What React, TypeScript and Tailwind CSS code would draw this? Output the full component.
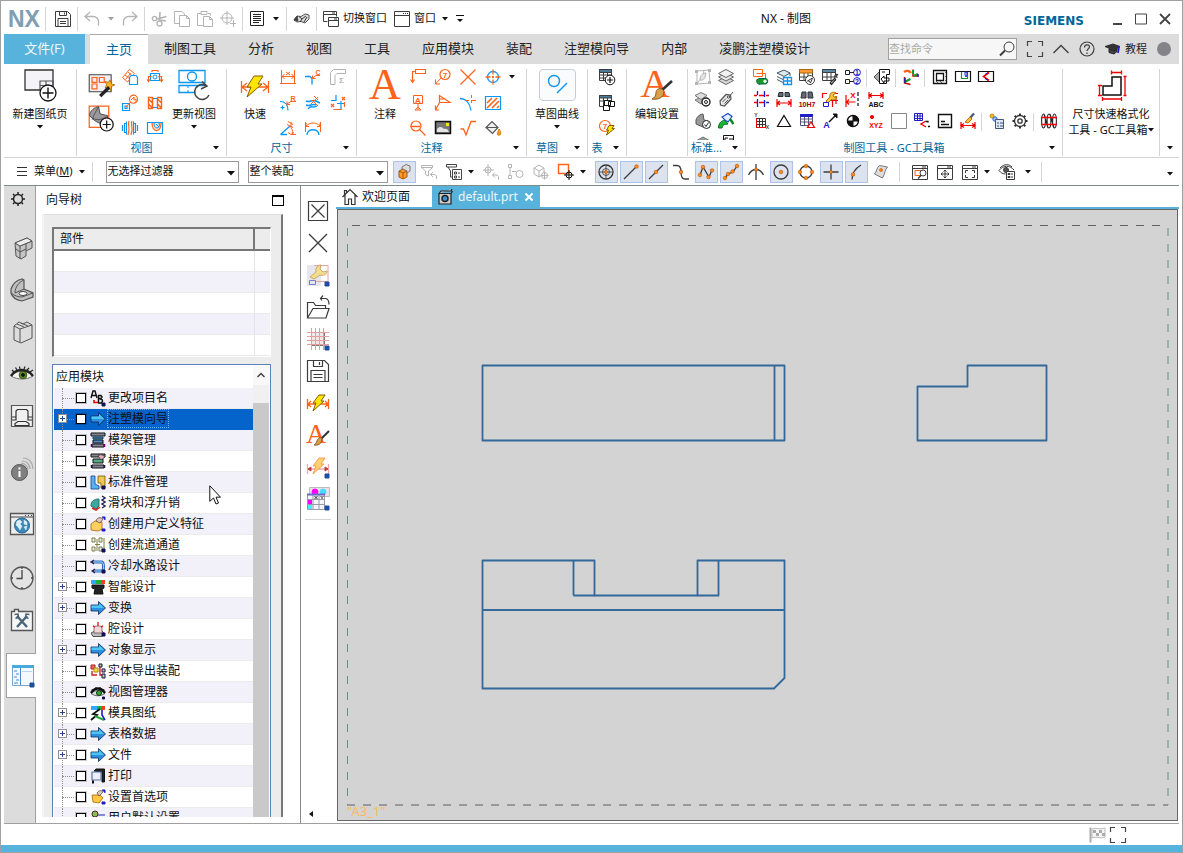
import type { ReactNode } from "react";
import clsx from "clsx";

const ORANGE = "#ff6319";
const BLUE = "#0a96f5";
const DARK = "#3c3c3c";
const RED = "#f00000";
const NAVY = "#1c1cc8";
const MUTED = "#b4b4b4";

type Paint = { c?: string; f?: string; w?: number };

const P = ({ d, c = DARK, f = "none", w = 1 }: Paint & { d: string }) => (
  <path d={d} stroke={c} fill={f} strokeWidth={w} />
);
const C = ({ x, y, r, c = DARK, f = "none", w = 1 }: Paint & { x: number; y: number; r: number }) => (
  <circle cx={x} cy={y} r={r} stroke={c} fill={f} strokeWidth={w} />
);
const T = ({ x, y, s = 8, c = DARK, children }: { x: number; y: number; s?: number; c?: string; children: string }) => (
  <text x={x} y={y} fontSize={s} fill={c} stroke="none" textAnchor="middle" fontWeight="bold" fontFamily="Liberation Sans, sans-serif">
    {children}
  </text>
);
const Dots = ({ at, r = 1.8 }: { at: number[][]; r?: number }) => (
  <>
    {at.map(([x, y]) => (
      <C key={`${x}-${y}`} x={x} y={y} r={r} c="#b85000" f="#ff8c1e" w={0.6} />
    ))}
  </>
);
const Badge = () => <P d="M19 19h4v4h-4z" c="#1d4fa0" f="#1d4fa0" />;

const glyphs: Record<string, ReactNode> = {
  // quick access bar
  save: <P d="M.5.5h12l3 3v12H.5zM4.500.5v4h7v-4M9.500 1.500v2M3 15.500v-8h10v8M5 10.500h6M5 12.500h6" />,
  undo: <P d="M6 1 1 5.500 6 10M1 5.500h8.500a5 5 0 0 1 5 5v4" c={MUTED} w={1.3} />,
  redo: <P d="M10 1l5 4.500-5 4.500M15 5.500H6.500a5 5 0 0 0-5 5v4" c={MUTED} w={1.3} />,
  cut: (
    <>
      <C x={3.5} y={7.5} r={2.2} c={MUTED} w={1.3} />
      <C x={8.5} y={12.5} r={2.5} c={MUTED} w={1.3} />
      <P d="M8.500 10 9 1M6 8l9.500-2.500M9 9l6 1" c={MUTED} w={1.6} />
    </>
  ),
  copy: <P d="M10.500 4.500V3l-2.500-2.500H.5v12h5M5.500 4.500h7l3 3v8h-10zM12.500 4.500v3h3" c={MUTED} />,
  paste: <P d="M6 14.500H.5v-12H4M11 2.500h2.500v2M4 .5h6v3H4zM6.500 5.500h6l3 3v7h-9zM12.500 5.500v3h3" c={MUTED} />,
  pan: (
    <>
      <C x={7} y={7} r={5} c={MUTED} />
      <P d="M7 0v14M0 7h14M13.500 9v7M10 12.500h6" c={MUTED} />
    </>
  ),
  lines: <P d="M1.500.5h13v14h-13zM4 3.500h8M4 5.500h8M4 7.500h8M4 9.500h8M4 11.500h6" c="#222" />,
  hand: (
    <>
      <P d="M0 9 3 5l4 .5L11 3l4 1v4l-4 4-4-1.500-4 .5z" c="#555" f="#ddd" />
      <P d="M5 5.500 8 8l4-3M8 8l-2 3M10 11l3-5" c="#333" />
      <P d="M0 9 3 5l1 5z" c="#444" f="#444" />
    </>
  ),
  switchWin: <P d="M4.500 10.500h-4v-10h13v5M.5 3.500h13M9 2h3M5.500 6.500h10v9h-10zM5.500 9.500h10M11 8h3" />,
  window: <P d="M.5.5h15v15H.5zM.5 4.500h15M9 2.500h1M11 2.500h1M13 2.500h1" />,
  more: (
    <>
      <P d="M4 4.500h8" c="#111" />
      <P d="M5 8h6l-3 3z" c="none" f="#111" />
    </>
  ),
  search: (
    <>
      <C x={10} y={6} r={5} />
      <P d="M6 9.500 1 14.500" w={2} />
    </>
  ),
  corners: <P d="M5 .5H.5V5M11 .5h4.500V5M5 15.500H.5V11M11 15.500h4.500V11" c="#444" w={1.2} />,
  up: <P d="M.5 12 8 4.500l7.500 7.500" w={1.3} />,
  help: (
    <>
      <C x={8} y={8} r={7} w={1.2} />
      <P d="M5.500 6.500c0-3.500 5-3.500 5-.5 0 1.500-2.500 2-2.500 4M8 11.500v1.500" w={1.2} />
    </>
  ),
  cap: (
    <>
      <P d="M0 5.500 8 3l7 2.500-6 4z" c="#333" f="#333" />
      <P d="M4 8v3.500l5 1.500 3-2.500V8L9 10z" c="#222" f="#444" />
      <P d="M14 5.500 13 12" c={NAVY} w={1.8} />
    </>
  ),

  // view group
  viewProjected: (
    <>
      <P d="M.5 8.500 7.500.5l5 4-7 8.500zM3 6l5 4M6 3l4.500 4M3.500 10.500 9 4" c={ORANGE} />
      <P d="M7.500 8.500 9 6.500h5l1.500 2v7h-8z" c={BLUE} f="#fff" w={1.2} />
    </>
  ),
  viewDetail: (
    <>
      <P d="M.5 8.500h7v7h-7zM3 11h2v2.500H3z" c={BLUE} w={1.2} />
      <C x={11.5} y={4.2} r={4} c={ORANGE} w={1.2} />
      <P d="M4 12 8.500 7M9 5l3-3v3l2-1v3" c={ORANGE} />
    </>
  ),
  viewBreak: (
    <>
      <P d="M4 3.500H2.500v9H4M.5 5v6M12 3.500h1.500v9H12M15.500 5v6M4.500 1.500v13M11.500 1.500v13" c={BLUE} w={1.2} />
      <P d="M7 1c-2 4 2 5-1 14M10 1c-2 4 2 5-1 14" c={ORANGE} w={1.2} />
    </>
  ),
  viewSection: (
    <>
      <P d="M3.500 4.500h9v7h-9z" c={BLUE} w={1.2} />
      <C x={8} y={8} r={2} c={BLUE} />
      <P d="M1.500 12V7.500h3M14.500 12V7.500h-3M0 10.500l1.500 2 1.500-2M13 10.500l1.500 2 1.500-2M5 3V1.500h6V3" c={ORANGE} w={1.2} />
    </>
  ),
  viewHalf: (
    <>
      <P d="M5.500 3.500h5v9h-5z" c={BLUE} w={1.2} />
      <P d="M1.500 2.500h4v11h-4zM10.500 2.500h4v11h-4zM1.500 4l4 4M1.500 9l4 4M10.500 4l4 4M10.500 9l4 4" c={ORANGE} w={1.4} />
    </>
  ),
  viewBreakout: (
    <>
      <P d="M.5 2.500h15v11H.5z" c={BLUE} w={1.2} />
      <P d="M5 3c0 4 2 8 5 7.500S14 6 14 3" c={ORANGE} f="#ffe4d4" w={1.2} />
      <P d="M7 3c0 3 1 5 3 5s3-2 2-5M9 4l3 3" c={BLUE} />
    </>
  ),

  // dimension group
  dimLinear: <P d="M1.500 1v13M14.500 1v13M2 7.500h12M4.500 5 2 7.500 4.500 10M11.500 5 14 7.500 11.500 10M0 14.500h16M6 3l4 3M10 3 6 6" c={ORANGE} />,
  dimChamfer: (
    <>
      <P d="M0 7.500h5l2 2v6" c={BLUE} w={1.3} />
      <P d="M15 6.500H11L7 9.500M7.500 6.500v3h3" c={ORANGE} />
      <T x={13} y={5.5} s={7} c={ORANGE}>C</T>
    </>
  ),
  dimOrdinate: (
    <>
      <P d="M.5 15.500v-12l3-3h12v4H7l-2 2v9z" c={MUTED} />
      <T x={11.5} y={14} s={8} c={MUTED}>Σ</T>
    </>
  ),
  dimRadial: (
    <>
      <P d="M0 6.500c5 0 8 3 8 9M.5 12.500h4M2.500 10.500v4" c={BLUE} w={1.2} />
      <P d="M16 6.500h-5L6 9.500M7 6.500v3h3" c={ORANGE} />
      <T x={13} y={5.5} s={7} c={ORANGE}>R</T>
    </>
  ),
  dimThick: (
    <>
      <P d="M1 6c4 2 6-2 10 0s4 2 4 2M1 10c4 2 6-2 10 0M3 14C6 9 8 14 12 11" c={BLUE} w={1.4} />
      <P d="M6 9 13 2M7 5l6 6M9 1l4 4" c={ORANGE} />
    </>
  ),
  dimArc: (
    <>
      <P d="M1 5.500h5M6 3v3M7 8.500h7M11 6v9M6 0v4" c={BLUE} w={1.2} />
      <P d="M1 9l3 3M4 9l-3 3M12 2l3 3M15 2l-3 3M3.500 14.500h8M14.500 7v5" c={ORANGE} w={1.2} />
    </>
  ),
  dimAngle: (
    <>
      <P d="M.5 14.500 10 6M.5 14.500H7" c={BLUE} w={1.3} />
      <P d="M8 1.500l5 3M7 4.500l6 3M11 2v6c2 2 2 5 1 7M8 12.500l3 2 3-2M11 14.500h5" c={ORANGE} />
    </>
  ),
  dimCurve: (
    <>
      <P d="M2 15c0-7 12-7 12 0" c={BLUE} w={1.4} />
      <P d="M.5 2v10M15.500 2v10M1 6c4-4 10-4 14 0M1 3v3.500h3M15 3v3.500h-3" c={ORANGE} />
    </>
  ),

  // annotation group
  leader: <P d="M5.500 4.500h10v-4h-10zM5.500 2.500H2.500v11M.5 10.500l2 3 2-3" c={ORANGE} w={1.2} />,
  datum: (
    <>
      <P d="M3.500.5h9v8h-9zM8 8.500v6M5 15l3-3 3 3z" c={ORANGE} />
      <T x={8} y={7.5} s={8} c={ORANGE}>A</T>
    </>
  ),
  magnify: (
    <>
      <C x={6} y={6} r={5} c={ORANGE} w={1.2} />
      <P d="M.5 6.500h10M9.500 9.500l6 6" c={ORANGE} w={1.3} />
    </>
  ),
  balloon: (
    <>
      <C x={10} y={5.5} r={5} c={ORANGE} w={1.2} />
      <P d="M6 9 .5 15M.5 10.500V15h4.500" c={ORANGE} />
      <T x={10} y={8.5} s={8} c={ORANGE}>7</T>
    </>
  ),
  flag: <P d="M4.500 7V.5L15 7.500H4.500L.5 15M.5 10.500V15h3.500M4.500 4h5" c={ORANGE} w={1.2} />,
  picture: (
    <>
      <P d="M.5 1.500h15v12H.5z" c="#111" f="#777" w={1.5} />
      <P d="M2 12V9c3-3 5-2 7 0 2-1 4 0 5 3z" c="none" f="#e4e4e4" />
      <P d="M11 3h3v3h-3z" c="none" f="#ffe600" />
    </>
  ),
  cross: <P d="M.5.5l15 15M15.500.5l-15 15" c={ORANGE} w={1.2} />,
  intersection: (
    <>
      <P d="M0 3.500c6 0 10 5 11 12" c={BLUE} w={1.3} />
      <P d="M6 5.500h3M11 5.500h5M11.500 0v3M11.500 5v3" c={ORANGE} />
    </>
  ),
  surface: <P d="M.5 9h3l2.500 6L11 1.500h5" c={ORANGE} w={1.3} />,
  target: (
    <>
      <C x={8} y={8} r={5.5} c={BLUE} w={1.3} />
      <P d="M8 .5v5M8 10.500v5M.5 8h5M10.500 8h5M7 8h2M8 7v2" c={ORANGE} w={1.3} />
    </>
  ),
  hatch: (
    <>
      <P d="M.5 1.500h15v13H.5z" c={BLUE} w={1.2} />
      <P d="M2 8l5-5M2 13 12 3M7 13l7-7M12 13l2-2" c={ORANGE} w={1.6} />
    </>
  ),
  fill: (
    <>
      <P d="M1 7.500 7 1.500l6 6-5.500 6zM1 7.500h11" c="#555" f="#f0f0f0" w={1.2} />
      <P d="M14 9c1.500 2.500 2 3 1.500 5s-3 1.500-3 0 1-3.500 1.500-5z" c="#d77a00" f="#ff9a1e" />
    </>
  ),

  // table group
  tableAdd: (
    <>
      <P d="M.5.5h12v11H.5zM.5 6h12M4.500 3v9M8.500 3v9M.5 9h12" />
      <P d="M.5.5h12v3H.5z" f="#4a7a9a" />
      <C x={11} y={11} r={4.8} c="#111" f="#fff" />
      <P d="M8 11h6M11 8v6" c="#111" w={1.2} />
    </>
  ),
  tableParts: (
    <>
      <P d="M.5.5h12v11H.5zM.5 6h12M4.500 3v9M8.500 3v9" />
      <P d="M.5.5h12v2.500H.5z" f="#4a7a9a" />
      <P d="M5.500 5.500h6v5h-6zM9.500 6.500h6v5h-6zM4.500 10.500h6v5h-6z" c="#111" f="#fff" />
    </>
  ),
  balloonAuto: (
    <>
      <C x={6} y={6} r={5.5} c={ORANGE} w={1.2} />
      <T x={6} y={9} s={8} c={ORANGE}>7</T>
      <P d="M10 5.500h5l-2 3h2.500L7.500 15l2-5H7.500z" c="#8a5a00" f="#ffe600" />
    </>
  ),

  // standard tools
  plane: (
    <>
      <P d="M2 2l12-1 1 13-13 1zM2 15c3-6 6-5 7-14" c={MUTED} />
      <P d="M0 1h3v3H0zM13 0h3v3h-3zM0 13h3v3H0zM13 12h3v3h-3z" c="none" f={MUTED} />
      <P d="M5 11c0-5 3-7 6-7-1 5-2 8-6 7z" c={MUTED} f="#e4e4e4" />
    </>
  ),
  layers: (
    <>
      <P d="M.5 11.500l7.500-4 7.500 4-7.500 4z" c="#666" f="#d8d8d8" />
      <P d="M.5 8l7.500-4 7.500 4-7.500 4z" c="#666" f="#e4e4e4" />
      <P d="M.5 4.500l7.500-4 7.500 4-7.500 4z" c="#666" f="#f0f0f0" />
    </>
  ),
  layerGear: (
    <>
      <P d="M0 9l6-3 6 3-6 4z" c="#777" f="#bbb" />
      <P d="M0 4.500l6-3 6 3-6 4z" c="#777" f="#ddd" />
      <C x={11} y={11} r={4} c="#222" f="#fff" w={1.4} />
      <C x={11} y={11} r={1.5} c="#222" />
    </>
  ),
  tag: (
    <>
      <P d="M2 10 8 3.500l4.500.5.500 4-6.500 7-4-1z" c="#555" f="#e8e8e8" w={1.2} />
      <C x={10.5} y={6} r={1.2} c="#555" />
      <P d="M4.500 11l3.500-3.500M6.500 12.500 10 9M11 6l4-5" c="#555" />
    </>
  ),
  partCheck: (
    <>
      <P d="M1 7C2 3 6 1 8 1l1 6 4 1-5 6-7-3z" c="#555" f="#999" />
      <C x={11.5} y={11.5} r={4} c="#222" f="#fff" />
      <P d="M9.500 11.500l1.500 2 2.500-4" c="#222" />
    </>
  ),
  paint: (
    <>
      <P d="M.5 15c0-6 4-7 6-8l3.500 4c-2 1-5-1-6 4z" c="#0a6a1a" f="#17b83a" />
      <P d="M4 4l6-3.500 4 3L10 9 7 7z" c="#1c4fc8" f="#e8f0ff" w={1.2} />
      <P d="M12 6l3.500 5" c="#0a8a1a" w={2.4} />
    </>
  ),
  chip: <P d="M0 6.500 8 2l8 4.500v9L8 12z" c="#777" f="#999" />,
  chipEn: (
    <>
      <P d="M0 9l6-5v5z" c="#777" f="#999" />
      <P d="M5.500.5h10v9h-10zM7 3h3M7 3v5M12 3v5M14 3v5" c="#111" />
    </>
  ),

  // GC toolbox
  gcExport: (
    <>
      <P d="M.5.5h9v7h-9zM3.500 4.500h9v6h-9" c={ORANGE} />
      <P d="M5.500 9.500H13a3 3 0 0 1 0 5.500H8a3 3 0 0 1-2.500-5.500z" c="#064" f="#1a9a28" />
      <C x={12} y={12.3} r={1.2} c="#fff" f="#fff" />
    </>
  ),
  gcLayers: (
    <>
      <P d="M1 4l7-3 6 3-6 3.500zM1 7.500l6 3M1 10.500l6 3M14 4v3" c="#456" f="#dde8ec" />
      <P d="M7.500 8.500h8v7h-8zM7.500 12h8M11.500 8.500v7" c={BLUE} f="#fff" w={1.3} />
    </>
  ),
  gcTableSend: (
    <>
      <P d="M.5.5h13v11H.5zM.5 8h13M5 4v8M9 4v8" />
      <P d="M.5.5h13V4H.5z" c="#a60" f="#ff9a3c" />
      <C x={11} y={11} r={4.5} f="#fff" />
      <P d="M8.500 12l5-3-2 5-1-2z" />
    </>
  ),
  gcTableTool: (
    <>
      <P d="M.5.5h13v11H.5zM.5 8h13M5 4v8M9 4v8" />
      <P d="M.5.5h13v3H.5z" f="#5a8aa8" />
      <P d="M8 14l5-5c-1-3 1-4 2.500-3.500L14 7.500l1.500 1M8 14l1.500 1.500L14 10" c="#333" f="#fff" w={1.2} />
    </>
  ),
  gcBalloons: (
    <>
      <P d="M.5 1.500h4v4h-4zM.5 10.500h4v4h-4zM5 3.500h4M5 12.500h4" c="#222" />
      <C x={12} y={3.5} r={3.4} c={NAVY} />
      <C x={12} y={12} r={3.4} c={NAVY} />
      <T x={12} y={6} s={7} c={NAVY}>1</T>
      <T x={12} y={14.5} s={7} c={NAVY}>2</T>
    </>
  ),
  gcConvert: (
    <>
      <P d="M0 8l5-5h5v10H5z" c="#555" f="#aaa" />
      <P d="M5.500.5h10v5h-3v9h-7zM8 3h3M7 10l3-3v2h5v3h-5v2z" c="#111" f="#fff" />
    </>
  ),
  gcCsys: (
    <>
      <P d="M1 3c3-2 6-1 7 1" c={ORANGE} w={2.4} />
      <P d="M10 .5V7h5.500M1.500 8v6l6 1.500" c="#c00" w={1.5} />
      <P d="M10 1v4M1.500 13l6-3M10 7l5-2" c="#139a2a" w={2} />
      <P d="M2 9v5M15 5v3" c={NAVY} w={1.5} />
    </>
  ),
  gcHole: (
    <>
      <P d="M3 15 1 13M7 15l-3-3M11 15l-3-3M15 13l-2-2M15 9l-2-2M15 5l-2-2" c="#777" />
      <P d="M1.500 1.500h13v13h-13zM4.500 4.500h7v7h-7z" c="#111" w={1.3} />
    </>
  ),
  gcPocket: (
    <>
      <P d="M.5 2.500h15v10H.5z" c="#111" w={1.2} />
      <P d="M6.500 3v6.500h6V3" c="#139a2a" w={1.2} />
      <P d="M10 3v3l1 2 1-2V3z" c={NAVY} />
    </>
  ),
  gcNotch: (
    <>
      <P d="M.5 2.500h15v10H.5z" c="#111" w={1.2} />
      <P d="M11 3.500 5.500 7.500l5.500 4" c={RED} w={1.6} />
      <P d="M10 3.500 7 5.500M10 11.500 7 9.500" c={NAVY} />
    </>
  ),
  gcCross: (
    <>
      <P d="M1 4.500h3M6 4.500h5M13 4.500h3M1 11.500h3M6 11.500h5" c={RED} w={1.3} />
      <P d="M4.500 0v4M4.500 8v8M11.500 0v6M11.500 9v7M13 11.500h3" c={NAVY} w={1.3} />
    </>
  ),
  gcFind: (
    <>
      <P d="M3 1.500h4v4H2zM9 1.500h4l1 4H9z" c="#233" f="#667" />
      <P d="M1 8v8M15 8v8M1 12h14M4 10l-3 2 3 2M12 10l3 2-3 2" c={RED} w={1.2} />
    </>
  ),
  gcTol: (
    <>
      <P d="M3 1h4v6H2zM9 1h4l1 6H9z" c="#233" f="#667" />
      <T x={8} y={16} s={7} c="#a00000">10H7</T>
    </>
  ),
  gcWrench: (
    <>
      <P d="M.5 7V2.500H5M10 2.500h6M10.500 9v7M5 9.500h11M14 5v8" c={RED} w={1.2} />
      <P d="M4 10l4-4c-1-4 3-6 6-4l-3 2 1 2 3 0c-1 3-4 3-5 2l-4 4z" c="#a60" f="#ffc838" />
      <P d="M1.500 11.500h5v4h-5z" c={NAVY} />
    </>
  ),
  gcDimX: (
    <>
      <P d="M1 4v12M1.500 11h9M4 8.500 1.500 11 4 13.500" c={RED} w={1.2} />
      <P d="M13 1v4M13 7v3M13 12v3" c="#111" w={1.2} />
      <T x={8} y={7} s={8} c={RED}>X</T>
    </>
  ),
  gcAbc: (
    <>
      <P d="M1 1v7M15 1v7M1 4.500h14M4 2.500l-3 2 3 2M12 2.500l3 2-3 2" c={RED} w={1.2} />
      <T x={8} y={15.5} s={7} c="#111">ABC</T>
    </>
  ),
  gcGrid: (
    <>
      <P d="M3.500 5.500h9v9h-9zM6.500 5.500v9M9.500 5.500v9M3.500 8.500h9M3.500 11.500h9" c="#333" />
      <P d="M3.500 5v9.500H13" c={RED} />
      <T x={3} y={4} s={5}>Y</T>
      <T x={14.5} y={15.5} s={5}>X</T>
    </>
  ),
  gcTriangle: <P d="M8 2.500 14.500 13.500h-13z" c="#111" w={1.2} />,
  gcSheet: (
    <>
      <P d="M1.500 1.500h12v11h-12zM1.500 6h12M1.500 9h12M5.500 3v9M9.500 3v9" c="#557" />
      <P d="M1.500 1.500h12v2h-12z" c={NAVY} f={NAVY} />
      <P d="M12 9l3.500 5.500H8.500z" c={RED} f="#fff" w={1.2} />
    </>
  ),
  gcArrowA: (
    <>
      <P d="M7 9l6-6" c="#111" w={1.5} />
      <P d="M11 1h4v4z" c="#111" f="#111" />
      <T x={4.5} y={15} s={9} c={NAVY}>A</T>
    </>
  ),
  gcCog: (
    <>
      <C x={8} y={8} r={5.5} c="#111" f="#fff" w={1.4} />
      <P d="M8 8V2.500A5.500 5.500 0 0 1 13.500 8zM8 8v5.500A5.500 5.500 0 0 1 2.500 8z" c="#111" f="#111" />
    </>
  ),
  gcXyz: (
    <>
      <C x={4} y={4} r={1.6} c={RED} f={RED} />
      <T x={8} y={15} s={7} c={RED}>XYZ</T>
    </>
  ),
  gcBlank: <P d="M.5.5h15v15H.5z" c="#888" />,
  gcGridSnap: (
    <>
      <P d="M.5.5h8v7h-8zM.5 3h8M.5 5.500h8M3.500.5v7M6 .5v7" c={NAVY} />
      <P d="M12 8 7 11l5 3" c={RED} w={1.4} />
      <P d="M12 8.500h2v1M14 13.500h2" c="#111" w={1.4} />
    </>
  ),
  gcNote: <P d="M1.500 1.500h13v13h-13zM4 8.500h4M4 11.500h8" c="#111" w={1.4} />,
  gcPaintDim: (
    <>
      <P d="M1 9v7M15 9v7M1 12.500h14M4 10.500l-3 2 3 2M12 10.500l3 2-3 2" c={RED} w={1.2} />
      <P d="M14 .5 10 5" c="#457" w={2.2} />
      <P d="M10 4 5 9l3 1 4-4z" c="#b70" f="#ffb84a" />
    </>
  ),
  gcParam: (
    <>
      <C x={3} y={3} r={2} c="#c80" f="#fb3" />
      <C x={6} y={6} r={2.2} c="#36c" f="#9bf" />
      <P d="M6.500 6.500h8v9h-8zM8 10h2M11 10h3M8 13h2M11 13h3" c="#457" f="#dde8ff" />
    </>
  ),
  gear: (
    <>
      <C x={8} y={8} r={5.5} c="#333" w={1.3} />
      <C x={8} y={8} r={2.2} c="#333" w={1.3} />
      <P d="M8 .5v2M8 13.500v2M.5 8h2M13.500 8h2M2.700 2.700l1.500 1.500M11.800 11.800l1.500 1.500M2.700 13.300l1.500-1.500M11.800 4.200l1.500-1.500" c="#333" w={2} />
    </>
  ),
  gcSpring: (
    <>
      <P d="M2.500 1C0 1 0 15 2.500 15S5 1 2.500 1zM8 1C5.500 1 5.500 15 8 15S10.500 1 8 1zM13.500 1C11 1 11 15 13.500 15S16 1 13.500 1zM3 1l4 14M9 1l4 14" c="#222" w={1.1} />
      <P d="M0 4.500h16M0 11.500h16" c={RED} w={1.3} />
    </>
  ),

  // selection bar
  selCube: (
    <>
      <P d="M3 7l4-2 4 2v6l-4 2-4-2z" c="#a50" f="#ff9a2e" />
      <P d="M6 5V3l4-2.500L14 2v5l-3 2V7L7 5z" c="#777" f="#ddd" />
      <P d="M3 7l4 2 4-2M7 9v6" c="#a50" />
    </>
  ),
  filterUndo: <P d="M.5 1.500h11v2l-4 3.500v5l-3-1.500V7L.5 3.500zM.5 3.500h11M12 8 9.500 10.500 12 13M9.500 10.500H14l1.500 1.500v3" c={MUTED} />,
  filterList: <P d="M.5.5h10v2.500H.5zM2 3l2.500 4v6H6M6.500 5.500h9v10h-9zM8.500 8h2v2h-2zM12 9h2M8.500 12h2v2h-2zM12 13h2" c="#444" />,
  snapUndo: (
    <>
      <C x={5} y={6} r={3} c={MUTED} />
      <P d="M5 0v12M0 6h11M12 8.500 9.500 11l2.500 2.500M9.500 11H14l1.500 1.500v3" c={MUTED} />
    </>
  ),
  selChain: (
    <>
      <P d="M.5.5h3v3h-3zM.5 11.500h3v3h-3zM2 4v8M4 7.500h4" c={MUTED} />
      <C x={11.5} y={10} r={3.5} c={MUTED} />
    </>
  ),
  selSolid: (
    <>
      <P d="M1 4l5-3 5 3v6l-5 3-5-3zM1 4l5 3 5-3M6 7v6" c={MUTED} />
      <C x={11.5} y={11.5} r={3} c={MUTED} f="#fff" />
      <P d="M11.500 7.500v8M7.500 11.500h8" c={MUTED} />
    </>
  ),
  selRect: (
    <>
      <P d="M.5.5h10v9H.5z" c={ORANGE} w={1.4} />
      <C x={11} y={11} r={3} c="#111" />
      <P d="M11 6v10M6 11h10" c="#111" />
    </>
  ),
  snapTarget: (
    <>
      <C x={8} y={8} r={7} c="#333" w={1.3} />
      <C x={8} y={8} r={3.5} c="#555" />
      <P d="M8 1v14M1 8h14" c="#555" />
      <Dots at={[[8, 8]]} r={1.5} />
    </>
  ),
  snapEnd: (
    <>
      <P d="M1 15 13.500 2.500" w={1.3} />
      <Dots at={[[13.5, 2.5]]} />
    </>
  ),
  snapMid: (
    <>
      <P d="M1 15 15 1" w={1.3} />
      <Dots at={[[8, 8]]} />
    </>
  ),
  snapArc: (
    <>
      <P d="M0 1.500h4c3 0 4 3 4 6.500s1 7 4 7h4" w={1.3} />
      <Dots at={[[8, 8]]} />
    </>
  ),
  snapZig: (
    <>
      <P d="M2 11 5 3l6 10 3-7" w={1.3} />
      <Dots at={[[2, 11], [5, 3], [10.5, 13], [14, 6.5]]} />
    </>
  ),
  snapPoly: (
    <>
      <P d="M2 14l3-4 5-2 4-6" w={1.3} />
      <Dots at={[[2, 14], [5, 10], [9.5, 7.5], [14, 2]]} />
    </>
  ),
  snapCross: (
    <>
      <P d="M8 0v16M.5 11C3 6 6 5.500 8 5.500S13 6 15.500 11" w={1.3} />
      <Dots at={[[8, 5.5]]} r={1.5} />
    </>
  ),
  snapCenter: (
    <>
      <C x={8} y={8} r={7} w={1.3} />
      <Dots at={[[8, 8]]} />
    </>
  ),
  snapQuad: (
    <>
      <C x={8} y={8} r={6} w={1.3} />
      <Dots at={[[8, 2], [8, 14], [2, 8], [14, 8]]} />
    </>
  ),
  snapPoint: (
    <>
      <P d="M8 .5v15M.5 8h15" w={1.3} />
      <Dots at={[[8, 8]]} r={1.5} />
    </>
  ),
  snapTangent: (
    <>
      <P d="M13 1C8 4 4 9 4 15.500" w={1.3} />
      <Dots at={[[5, 10.5]]} />
    </>
  ),
  snapFace: (
    <>
      <P d="M1.500 10C4 8 3 4 6.500 1.500l8 1.500c-3 3-2 6-5 11z" c="#777" f="#ddd" />
      <Dots at={[[8, 6]]} r={1.5} />
    </>
  ),
  winZoom: (
    <>
      <P d="M.5 1.500h15v14H.5zM.5 4.500h15M10 3h4" />
      <P d="M3 6.500h7v5H3z" c={ORANGE} />
      <C x={11} y={9} r={3} f="#fff" />
      <P d="M9 11.500l-3 3" w={1.5} />
    </>
  ),
  winPan: <P d="M.5 1.500h15v14H.5zM.5 4.500h15M10 3h4M8 6v8M4 10h8M6.500 7.500 8 6l1.500 1.500M6.500 12.500 8 14l1.500-1.500M5.500 8.500 4 10l1.500 1.500M10.500 8.500 12 10l-1.500 1.500" />,
  winFit: <P d="M.5 1.500h15v14H.5zM.5 4.500h15M10 3h4M3.500 9V6.500H6M10 6.500h2.500V9M3.500 11v2.500H6M10 13.500h2.500V11" />,
  eyeList: (
    <>
      <P d="M0 6.500C4 1 11 1 15 6M0 6.500C2 9 4 10 6.500 10M1 4C5-.5 10 0 13 3" />
      <C x={7} y={6} r={2.5} f="#555" />
      <P d="M7.500 7.500h8v8h-8zM9 9.500h2v1H9zM12 10h2M9 12.500h2v1H9zM12 13h2" f="#fff" />
    </>
  ),

  // document tabs and status bar
  home: <P d="M.5 8 8 .5 15.500 8M3 6v9.500h3.500V10h3v5.500H13V6M4.500 3.500v-2h-2V6" c="#333" w={1.2} />,
  part: (
    <>
      <P d="M1 4.500 3 2h10l1-2M1 4.500h12V15H1zM13 4.500 14.500 2" c="#222" f="#ccc" w={1.2} />
      <C x={7} y={9.5} r={3} c="#222" f="#3c8fd0" w={1.5} />
    </>
  ),
  flagCheck: (
    <>
      <P d="M.5.5v15" c="#aaa" w={2} />
      <P d="M2 2c4-2 8 1 13-1v9c-5 2-9-1-13 1z" c="#bbb" f="#f6f6f6" />
      <P d="M3 3h3v3H3zM9 3h3v3H9zM6 6h3v3H6zM12 6h3v3h-3z" c="none" f="#aaa" />
    </>
  ),
};

// icons of the left rail and the vertical command strip, 24px grid
const sideGlyphs: Record<string, ReactNode> = {
  assembly: (
    <>
      <P d="M5 7l12-5 5 3v7l-6 3v5l-5 3-5-3z" c="#555" f="#c4c4c4" />
      <P d="M5 7l5 3 12-5M10 10v13M16 8v7M10 16l6-3M6 13l4 3" c="#555" />
      <P d="M5 7l12-5 5 3-12 5z" c="#555" f="#eee" />
    </>
  ),
  bracket: (
    <>
      <P d="M1 15V11C3 5 7 2 12 1l2 1v9l9 4v4l-11 4C7 22 2 19 1 15z" c="#555" f="#c0c0c0" w={1.2} />
      <P d="M5 15C5 9 9 4 14 2M5 15l9-4M1 15c4 3 7 4 11 4l11-4" c="#555" />
      <ellipse cx="13" cy="15.500" rx="4" ry="2" fill="#fff" stroke="#444" />
    </>
  ),
  books: (
    <>
      <P d="M4 6l5-4 4 2 4-2 5 3v13l-11 5-7-3z" c="#555" f="#ddd" />
      <P d="M4 6l6 3v13M10 9l12-4M7 4l7 3M11 3l7 3" c="#555" />
    </>
  ),
  eye: (
    <>
      <P d="M1 14C7 8 17 7 23 14c-6 4-16 4-22 0z" c="#777" f="#f4f4f4" />
      <C x={13} y={13} r={3.8} c="#3a5a14" f="#5a8a22" />
      <C x={13} y={13} r={1.4} c="#111" f="#111" />
      <P d="M1 14C6 6 17 6 23 14" c="#222" w={2.4} />
      <P d="M4 10 2 8M7 8 5.500 5.500M10 7 9.500 4.500M14 7l1-2.500M17 8l2-2M20 10l3-2" c="#222" w={1.2} />
    </>
  ),
  machine: (
    <>
      <P d="M1.500 1.500h21v21h-21z" c="#555" f="#f0f0f0" w={1.2} />
      <P d="M2 13h4V7l1.500-1.500h9L18 7v6h4M2 16h4v-3M22 16h-4v-3M5 21.500v-2l3-2h8l3 2v2z" c="#333" w={1.2} />
    </>
  ),
  info: (
    <>
      <C x={9.5} y={14.5} r={8} c="#555" f="#808080" />
      <P d="M9.500 9.500v2M9.500 13v6" c="#fff" w={2} />
      <P d="M12 3c5 0 8 4 8 8M13 0c6 0 10 5 10 11M11 5c3 0 7 3 7 7" c="#aaa" w={1.2} />
    </>
  ),
  web: (
    <>
      <P d="M.5 1.500h23v21H.5z" c="#555" f="#eee" w={1.3} />
      <P d="M.5 5h23M15 3.500h1M18 3.500h1M21 3.500h1" c="#444" />
      <C x={12} y={13.5} r={7.5} c="#2a6a94" f="#3a88b8" />
      <P d="M7 9l3-1 2 2-2 2 2 2-2 4-2-3-2-2zM14 8l3 2 0 3-3-1zM14 15l3-1-1 4z" c="#dfeef6" f="#dfeef6" w={0.5} />
    </>
  ),
  clock: (
    <>
      <C x={12} y={12} r={11} c="#555" f="#e4e4e4" w={1.3} />
      <P d="M12 4v8.500H6.500M12 1v2M12 21v2M1 12h2M21 12h2" c="#444" w={1.3} />
    </>
  ),
  tools: (
    <>
      <P d="M1.500 22.500v-19h3v-2h4v2h14v19z" c="#555" f="#f6f6f6" w={1.3} />
      <P d="M7 8l10 11M17 8 7 19" c="#4a6478" w={2.4} />
      <P d="M4.500 6.500 8 6l.5 3-3 1.500M19.500 6.500 16 6l-.5 3 3 1.500" c="#4a6478" w={1.5} />
    </>
  ),
  wizard: (
    <>
      <P d="M1.500 1.500h21v20h-21z" c="#7ba5d0" f="#f4f8ff" />
      <P d="M1 1h22v3H1z" c="none" f="#4aa9dc" />
      <P d="M9.500 4v17M3 7h3M5 10h3M3 13h3M5 16h3M3 19h4" c="#4a88c8" />
      <P d="M11 7.500h10" c="#bcd4ea" />
      <Badge />
    </>
  ),
  boxX: <P d="M2.500 2.500h19v19h-19zM5.500 5.500l13 13M18.500 5.500l-13 13" w={1.2} />,
  bigX: <P d="M3 3l18 18M21 3 3 21" w={1.3} />,
  wrenchPlan: (
    <>
      <P d="M1 2h14v21H1z" c="none" f="#e6e6ee" />
      <P d="M8 2.500h14M22 2v20M10 18.500h12" c="#e9a0a0" />
      <P d="M4 14l6-5c-1-4 2-7 5-7l-1 4 3 3 4-1c0 4-4 5-7 4l-6 4z" c="#c8a860" f="#f4dc90" />
      <P d="M3.500 17.500h6v4h-6z" c="#7a7ad8" />
      <Badge />
    </>
  ),
  open: <P d="M1.500 23V7.500h6l2 3h10V14M1.500 23 7 13.500h16L20 23zM16 5.500l-1.500-2L17 .5M14.500 3.500H20c3 1 3 4 3 6" w={1.2} />,
  gridRed: (
    <>
      <P d="M5.500 5.500h13v13h-13z" c="#777" f="#f0e8e8" />
      <P d="M5.500 1v22M9.500 1v22M13.500 1v22M17.500 1v22M1 5.500h22M1 9.500h22M1 13.500h22M1 17.500h22" c="#e89c9c" />
      <Badge />
    </>
  ),
  saveBig: <P d="M1.500 1.500h17l4 4v17h-21zM7.500 1.500v6h9v-6M13.500 3v3M5 22.500v-11h14v11M7.500 15.500h9M7.500 18.500h9" w={1.2} />,
  quickDim: (
    <>
      <P d="M1.500 8v10M22.500 8v10M2 13h20M5 10l-3 3 3 3M19 10l3 3-3 3" c={ORANGE} w={1.3} />
      <P d="M13 4h6l-4 6h3L7 20l3-8H7z" c="#8a5a00" f="#ffe600" />
    </>
  ),
  editText: (
    <>
      <text x="10" y="20" fontSize="28" fill={ORANGE} textAnchor="middle" fontFamily="Liberation Serif, serif">A</text>
      <P d="M23 8 15 16" c="#333" w={2} />
      <P d="M16 15c-2-1-4 0-5 3-.5 2-2 3-3 4 4 .5 8-.5 8-7z" c="#8a5a20" f="#d9a04a" />
    </>
  ),
  quickDimOff: (
    <>
      <P d="M1.500 9v10M22.500 9v10M2 14h20" c="#f0a8a8" w={1.3} />
      <P d="M5 12l-3 2 3 2zM19 12l3 2-3 2z" c="#c04040" f="#c04040" />
      <P d="M13 3h6l-4 6h3L7 19l3-8H7z" c="#f5a050" f="#ffd070" />
      <Badge />
    </>
  ),
  colorTable: (
    <>
      <P d="M3.500.5h20v9h-20z" c="#bbb" f="#e4e4e4" />
      <C x={9} y={5} r={3} c="#f0f" f="#f0f" />
      <C x={17} y={5} r={3} c="#4df" f="#4df" />
      <P d="M1.500 7.500h17v15h-17zM1.500 12.500h17M1.500 17.500h17M7 7v15M13 7v15" c="#99a" f="#f4f4fa" />
      <P d="M1 7.500h18" c="#6a6ac8" w={2} />
      <P d="M2 13h4v4H2z" c="none" f="#f0f" />
      <P d="M2 18h4v4H2z" c="none" f="#4ef" />
      <P d="M8.500 9l3 3M11.500 9l-3 3M14.500 9l1.500 1.500L17.500 9M16 10.500V12" c="#333" />
      <Badge />
    </>
  ),
};

// large ribbon icons, 32px grid
const bigGlyphs: Record<string, ReactNode> = {
  newSheet: (
    <>
      <P d="M1 1h28v20H1z" c="#333" f="#f4f4f8" w={1.3} />
      <P d="M16 12h13v9H16zM16 16.500h13M22 12v4" c="#555" w={1.2} />
      <C x={24} y={24} r={8} c="#111" f="#fff" w={1.3} />
      <P d="M18.500 24h11M24 18.500v11" c="#111" w={1.4} />
    </>
  ),
  updateView: (
    <>
      <P d="M1 1.500h26v12H1zM27 17v-.5H1v7h16" c={BLUE} w={1.3} />
      <C x={14} y={7.5} r={4.5} c={BLUE} w={1.3} />
      <P d="M10 17v2M10 21v2M19 17v2" c={BLUE} />
      <P d="M31 26a7.500 7.500 0 1 1-3-9.500M24 12.500l5 4.500-6 3" c="#444" w={1.5} />
    </>
  ),
  quick: (
    <>
      <P d="M2.500 12v12M29.500 12v12M3 18h26M8 14l-5 4 5 4M24 14l5 4-5 4" c={ORANGE} w={1.3} />
      <P d="M15 7h9l-5 8h4L8 28l4-10H8z" c="#8a5a00" f="#ffe600" />
    </>
  ),
  textA: <text x="16" y="30" fontSize="44" fill={ORANGE} textAnchor="middle" fontFamily="Liberation Serif, serif">A</text>,
  editSettings: (
    <>
      <text x="14" y="28" fontSize="41" fill={ORANGE} textAnchor="middle" fontFamily="Liberation Serif, serif">A</text>
      <P d="M31 12 20 22" c="#333" w={2.6} />
      <P d="M21 20c-3-1-6 0-6 4 0 3-2 5-4 6 6 1 12-1 12-8z" c="#8a5a20" f="#d9a04a" />
    </>
  ),
  sketch: (
    <>
      <C x={13} y={12} r={5.5} c={BLUE} w={1.4} />
      <P d="M16 24 26 14" c={BLUE} w={1.4} />
    </>
  ),
  quickFormat: (
    <>
      <P d="M8 26V17h9V8h9v18z" c="#111" w={1.5} />
      <P d="M4.500 17v9M3 16.500h4M3 26.500h4M17 3.500h9M16.500 1.500v4M26.500 1.500v4M30 8v18M28.500 7.500h3M28.500 26.500h3M8 30h18M7.500 28v4M26.500 28v4" c={RED} w={1.3} />
    </>
  ),
  wandSheet: (
    <>
      <P d="M1.500 4.500h27v21h-27z" c="#444" f="#f0f0f4" w={1.3} />
      <P d="M5 8h6v6H5zM14 8h6v6h-6zM5 16h6v6H5z" c={ORANGE} w={1.5} />
      <P d="M27 11l2 5 4 1-4 2-1 5-3-4-4 1 2-4-2-4 4 1z" c="#a60" f="#ffb020" />
      <P d="M15 31 26 20" c="#222" w={4} />
    </>
  ),
  baseView: (
    <>
      <P d="M1.500 1.500h24v26h-24z" c={ORANGE} w={1.5} />
      <P d="M2 13C2 7 8 3 13 2l2 9 9 2v9c-6 3-15 0-22-9z" c="#333" f="#999" />
      <P d="M5 18c3-8 5-10 8-16M6 16c4 3 9 3 18-2" c="#444" />
      <C x={23} y={24} r={8} c="#111" f="#fff" w={1.5} />
      <P d="M18 24h10M23 19v10" c="#111" w={1.5} />
    </>
  ),
};

// icons in front of the tree entries
const treeGlyphs: Record<string, ReactNode> = {
  rename: (
    <>
      <P d="M1 8 3 1h2l2 7M2 5.500h4" c="#111" w={1.4} />
      <P d="M8.500 5v8M8 5.500h3l1 1.500-1 1.500H9l3 1 .5 1.500-1 2H8" c="#111" w={1.5} />
      <P d="M4 10v2.500h4" c={RED} w={1.6} />
      <P d="M12 13h3v3h-3z" c="#115" f="#115" />
    </>
  ),
  arrow: (
    <>
      <P d="M1 5h7.500V1.500L15.500 8 8.500 14.500V11H1z" c="#0a2a50" f="#2c8fe0" w={0.8} />
      <P d="M1.500 5.500H9V3l5 5H1.500z" c="none" f="#4cc4f4" />
    </>
  ),
  frame: (
    <>
      <P d="M1 1h14v3H1zM2 12h12v3H2z" c="#111" f="#889" />
      <P d="M3 5h10v2H3z" c="#148" f="#3c8a6a" />
      <P d="M3 8h10v3H3z" c="#111" f="#58c" />
      <P d="M1.500 12v3M14.500 12v3" c="#606" w={1.5} />
    </>
  ),
  frameFind: (
    <>
      <P d="M1 1h14v3H1zM2 12h12v3H2z" c="#111" f="#889" />
      <P d="M3 6h10v4H3z" c="#111" f="#5a8" />
      <P d="M8 3c3-3 6 0 7 1l-4 3z" c="#444" f="#eab" />
      <P d="M1.500 12v3M14.500 12v3" c="#115" w={1.5} />
    </>
  ),
  standard: (
    <>
      <P d="M1 2h4v8l4 2v3H1z" c="#148" f="#5ab0f0" w={0.8} />
      <P d="M8 2h7v12h-4V9H8z" c="#750" f="#f0c850" w={0.8} />
      <P d="M12 12h3v3h-3z" c="#115" f="#115" />
    </>
  ),
  slider: (
    <>
      <P d="M1 11c0-5 3-7 8-7v7l-3 3z" c="#276" f="#3fa7a0" />
      <P d="M2 13l4 2 4-3" c="#d22" w={1.5} />
      <P d="M12 1l3 2-3 2 3 2-3 2 3 2-3 2" c="#225" w={1.5} />
    </>
  ),
  feature: (
    <>
      <P d="M1 8l4-3 7 1v7l-4 2-7-1z" c="#a60" f="#ffd060" w={0.8} />
      <P d="M6 5c1-4 5-4 7-2l-3 4z" c="#644" f="#dcb" w={0.8} />
      <P d="M12 1h3v3M12 13h3v2h-3z" c={NAVY} f={NAVY} />
    </>
  ),
  runner: (
    <>
      <P d="M2 1h3v4H2zM2 10h3v4H2zM9 1h3v4H9zM9 10h3v4H9zM5 7.500h5M7 2v12M14 1v12" c="#7a8040" f="#eee" />
      <P d="M12 12h3v3h-3z" c="#115" f="#115" />
    </>
  ),
  cooling: (
    <>
      <P d="M4 4h8c2 1 2 8 0 9H5" c="#2a6ac0" w={3} />
      <P d="M4 4h8c2 1 2 8 0 9H5" c="#a8d8f8" w={1} />
      <P d="M0 4h4M4 2l-3 2 3 2M2 13h3M5 11l-3 2 3 2" c="#225" w={1.2} />
      <P d="M12 12h3v3h-3z" c="#115" f="#115" />
    </>
  ),
  smart: (
    <>
      <P d="M1 1h5v4H1z" c="none" f="#2fa8ff" />
      <P d="M6 1h5v4H6z" c="none" f="#20b040" />
      <P d="M11 1h4v4h-4z" c="none" f="#f04020" />
      <P d="M2 6h12v3l-2 1 1 5H4l1-5-3-1z" c="#111" f="#222" />
    </>
  ),
  cavity: (
    <>
      <P d="M1 12l4-2h7l3 3-3 2.500H3z" c="#555" f="#bbb" />
      <P d="M4 12V8c0-3 2-3 4-3s4 0 4 3v4z" c="#755" f="#f0d8d8" w={0.8} />
      <P d="M8 1v4M3 5l2 1M13 5l-2 1" c="#d22" w={1.4} />
      <P d="M12 12h3v3h-3z" c="#115" f="#115" />
    </>
  ),
  export: (
    <>
      <P d="M1 2h4v4H1z" c="#a22" f="#e66" />
      <P d="M4 5h4v4H4z" c="#a80" f="#fd4" />
      <P d="M2 8v4h5M10 2v10h2" c="#c22" w={1.4} />
      <P d="M9 1h3v3H9zM12 6h3v3h-3zM12 11h3v4h-3z" c="#115" f="#cc8" />
    </>
  ),
  eye: (
    <>
      <P d="M1 9.500c4-4 10-4 14 0-4 3-10 3-14 0z" c="#444" f="#ddd" w={0.8} />
      <C x={9} y={9} r={2.5} c="#131" f="#3a3" />
      <P d="M1 9c4-6 10-6 14 0" c="#111" w={2.4} />
      <P d="M3 7 2 5M6 5V3M10 5V3M13 7l1-2" c="#111" />
      <P d="M12.500 13h2v2h-2z" c="#115" f="#115" />
    </>
  ),
  mold: (
    <>
      <P d="M1 1h7v4H1z" c="none" f="#2fa8ff" />
      <P d="M7 1h4v4H7z" c="none" f="#20b040" />
      <P d="M11 1h4v4h-4z" c="none" f="#f04020" />
      <P d="M10 4 3 9l4 1-6 5" c="#111" w={1.8} />
      <P d="M5 11l9 4" c="#2a3" w={2} />
      <P d="M12 5v5l3 5" c={NAVY} w={1.6} />
    </>
  ),
  print: (
    <>
      <P d="M4 3 6 1h8.500v13H12V4z" c="#111" f="#222" />
      <P d="M2 4h9v8H2z" c="#57a" f="#eef" w={1.2} />
      <P d="M3 12.500v3" c="#111" w={2} />
    </>
  ),
  prefs: (
    <>
      <P d="M2 6h8l3 3-4 5-6-1z" c="#a60" f="#ffc840" w={0.8} />
      <P d="M7 4c2-3 5-3 6-1l-4 4z" c="#644" f="#dcb" w={0.8} />
      <P d="M12 1h3v3M12 13h3v2h-3z" c={NAVY} f={NAVY} />
    </>
  ),
  user: (
    <>
      <C x={5} y={4} r={3} c="#522" f="#8b5" />
      <P d="M8 5h7M8 9h7" c="#66c" w={1.5} />
    </>
  ),
};

const sheets = { small: glyphs, side: sideGlyphs, big: bigGlyphs, tree: treeGlyphs };
const boxes = { small: "0 0 16 16", side: "0 0 24 24", big: "0 0 32 32", tree: "0 0 16 16" };

const Glyph = ({ name, set = "small", className = "size-4" }: { name: string; set?: keyof typeof sheets; className?: string }) => (
  <svg viewBox={boxes[set]} className={clsx("shrink-0 overflow-visible", className)} aria-hidden="true">
    {sheets[set][name]}
  </svg>
);

const Caret = ({ className }: { className?: string }) => (
  <svg viewBox="0 0 6 4" className={clsx("h-1 w-1.5 shrink-0", className)} aria-hidden="true">
    <path d="M0 0h6L3 3.500z" fill="#111" />
  </svg>
);

const Divider = ({ className }: { className?: string }) => <div className={clsx("w-px shrink-0 bg-[#d4d4d4]", className)} />;

const IconButton = ({ name, label }: { name: string; label?: string }) => (
  <button type="button" aria-label={label ?? name} className="flex size-4 items-center justify-center">
    <Glyph name={name} />
  </button>
);

const BigButton = ({ icon, label, caret, className }: { icon: string; label: string; caret?: boolean; className?: string }) => (
  <button type="button" className={clsx("flex shrink-0 flex-col items-center self-start whitespace-nowrap", className)}>
    <Glyph name={icon} set="big" className="size-8" />
    <span className="mt-[5px] leading-4">{label}</span>
    {caret && <Caret className="mt-[3px]" />}
  </button>
);

const IconGrid = ({ icons, className }: { icons: string[]; className?: string }) => (
  <div className={clsx("grid grid-flow-col grid-rows-3 content-start gap-x-[9px] gap-y-1.5", className)}>
    {icons.map((icon) => (
      <IconButton key={icon} name={icon} />
    ))}
  </div>
);

const RibbonGroup = ({ title, className, children }: { title?: string; className: string; children: ReactNode }) => (
  <section className={clsx("flex shrink-0 flex-col border-r border-[#d4d4d4]", className)}>
    <div className="flex h-[71px]">{children}</div>
    {title && (
      <div className="flex items-center leading-4 text-[#00659b]">
        <h2 className="flex-1 text-center whitespace-nowrap">{title}</h2>
        <button type="button" aria-label={`${title} 选项`} className="flex h-4 w-5 items-center justify-center">
          <Caret />
        </button>
      </div>
    )}
  </section>
);

const TitleBar = () => (
  <header className="flex h-[33px] shrink-0 items-center pt-0.5">
    <div className="flex w-[546px] shrink-0 items-center text-[11px]">
      <span className="ml-1 w-[37px] font-['Liberation_Sans',sans-serif] text-[23px] leading-6 font-bold text-[#7f9db3]">NX</span>
      <Divider className="h-6" />
      <div className="ml-[9px] flex items-center">
        <IconButton name="save" label="保存" />
      </div>
      <Divider className="mx-1.5 h-6" />
      <div className="flex items-center gap-2">
        <IconButton name="undo" label="撤消" />
        <Caret className="opacity-40" />
        <IconButton name="redo" label="重做" />
      </div>
      <Divider className="mx-1.5 h-6" />
      <div className="flex items-center gap-[7px]">
        <IconButton name="cut" label="剪切" />
        <IconButton name="copy" label="复制" />
        <IconButton name="paste" label="粘贴" />
        <IconButton name="pan" label="移动" />
      </div>
      <Divider className="mx-1.5 h-6" />
      <div className="flex items-center gap-2">
        <IconButton name="lines" label="列表" />
        <Caret />
      </div>
      <Divider className="mx-[7px] h-6" />
      <IconButton name="hand" label="触控模式" />
      <Divider className="mx-1.5 h-6" />
      <button type="button" className="flex items-center gap-1">
        <Glyph name="switchWin" />
        切换窗口
      </button>
      <button type="button" className="ml-[7px] flex items-center gap-1">
        <Glyph name="window" />
        窗口
        <Caret className="ml-0.5" />
      </button>
      <div className="ml-1 flex">
        <IconButton name="more" label="更多" />
      </div>
    </div>
    <h1 className="flex-1 pr-0.5 text-center text-[12px]">NX - 制图</h1>
    <span className="mr-[27px] pt-1 font-['DejaVu_Sans',sans-serif] text-[12px] font-bold text-[#00659b]">SIEMENS</span>
    <div className="mr-2 flex items-center gap-3 text-[#444]">
      <button type="button" aria-label="最小化">
        <svg viewBox="0 0 12 12" className="size-3">
          <path d="M2 11h9" stroke="currentColor" strokeWidth="2" />
        </svg>
      </button>
      <button type="button" aria-label="最大化">
        <svg viewBox="0 0 12 12" className="size-3">
          <path d="M.5 1h11v10H.5z" fill="none" stroke="currentColor" />
        </svg>
      </button>
      <button type="button" aria-label="关闭">
        <svg viewBox="0 0 12 12" className="size-3">
          <path d="M1 1l10 10M11 1 1 11" stroke="currentColor" strokeWidth="1.800" />
        </svg>
      </button>
    </div>
  </header>
);

const tabs = ["制图工具", "分析", "视图", "工具", "应用模块", "装配", "注塑模向导", "内部", "凌鹏注塑模设计"];

const TabBar = () => (
  <nav className="flex h-[30px] shrink-0 items-center bg-[#dcdcdc] text-[13px] whitespace-nowrap text-[#222]">
    <button type="button" className="mr-[5px] h-full w-[81px] bg-[#58b3dc] text-[#eef7fb]">文件(F)</button>
    <button type="button" className="h-full border-t border-[#aaa] bg-white px-4 text-[#00659b]">主页</button>
    {tabs.map((tab) => (
      <button type="button" key={tab} className="h-full px-4">
        {tab}
      </button>
    ))}
    <div className="ml-auto flex items-center gap-2.5 pr-2 text-[11px]">
      <label className="flex h-[22px] w-[129px] items-center border border-[#a0a0a0] bg-[#f7f7f7] pr-px">
        <input aria-label="查找命令" placeholder="查找命令" className="w-0 flex-1 bg-transparent placeholder:text-[#aaa] focus:outline-none" />
        <Glyph name="search" />
      </label>
      <IconButton name="corners" label="全屏" />
      <IconButton name="up" label="最小化功能区" />
      <IconButton name="help" label="帮助" />
      <button type="button" className="flex items-center gap-1">
        <Glyph name="cap" />
        教程
      </button>
      <span className="size-3.5 rounded-full bg-[#848488]" />
    </div>
  </nav>
);

const gcRows = [
  ["gcExport", "gcLayers", "gcTableSend", "gcTableTool", "gcBalloons", "|", "gcConvert", "|", "gcCsys", "|", "gcHole", "gcPocket", "gcNotch"],
  ["gcCross", "gcFind", "gcTol", "gcWrench", "gcDimX", "gcAbc"],
  ["gcGrid", "gcTriangle", "gcSheet", "gcArrowA", "gcCog", "gcXyz", "gcBlank", "gcGridSnap", "gcNote", "gcPaintDim", "|", "gcParam", "gear", "|", "gcSpring"],
];

const Ribbon = () => (
  <div className="flex shrink-0 border-b border-[#d4d4d4] pt-[5px] pb-px text-[11px] text-[#111]">
    <RibbonGroup className="w-[73px]">
      <BigButton icon="newSheet" label="新建图纸页" caret className="mx-auto" />
    </RibbonGroup>
    <RibbonGroup title="视图" className="w-[150px]">
      <div className="ml-[11px] flex flex-col gap-2 pt-0.5">
        <button type="button" aria-label="视图创建向导">
          <Glyph name="wandSheet" set="big" className="size-[26px]" />
        </button>
        <button type="button" aria-label="基本视图">
          <Glyph name="baseView" set="big" className="size-[26px]" />
        </button>
      </div>
      <IconGrid className="ml-2" icons={["viewProjected", "viewDetail", "viewBreak", "viewSection", "viewHalf", "viewBreakout"]} />
      <BigButton icon="updateView" label="更新视图" caret className="ml-[9px]" />
    </RibbonGroup>
    <RibbonGroup title="尺寸" className="w-[130px]">
      <BigButton icon="quick" label="快速" className="ml-3" />
      <IconGrid
        className="ml-[9px]"
        icons={["dimLinear", "dimRadial", "dimAngle", "dimChamfer", "dimThick", "dimCurve", "dimOrdinate", "dimArc"]}
      />
    </RibbonGroup>
    <RibbonGroup title="注释" className="w-[170px]">
      <BigButton icon="textA" label="注释" className="ml-3" />
      <IconGrid
        className="ml-[9px]"
        icons={["leader", "datum", "magnify", "balloon", "flag", "picture", "cross", "intersection", "surface", "target", "hatch", "fill"]}
      />
      <Caret className="mt-1.5 ml-2" />
    </RibbonGroup>
    <RibbonGroup title="草图" className="w-[61px]">
      <button type="button" className="mx-auto flex flex-col items-center self-start whitespace-nowrap">
        <span className="flex h-8 w-[37px] items-center justify-center rounded-sm border border-[#c8ccd4] bg-[#fafbfc]">
          <Glyph name="sketch" set="big" className="size-8" />
        </span>
        <span className="mt-[5px] leading-4">草图曲线</span>
        <Caret className="mt-[3px]" />
      </button>
    </RibbonGroup>
    <RibbonGroup title="表" className="w-[39px]">
      <IconGrid className="mx-auto" icons={["tableAdd", "tableParts", "balloonAuto"]} />
    </RibbonGroup>
    <RibbonGroup className="w-[61px]">
      <BigButton icon="editSettings" label="编辑设置" className="mx-auto" />
    </RibbonGroup>
    <RibbonGroup title="标准..." className="w-[58px]">
      <div className="grid h-full grid-cols-2 content-start gap-x-[7px] gap-y-1.5 overflow-hidden pl-[7px]">
        {["plane", "layers", "layerGear", "tag", "partCheck", "paint", "chip", "chipEn"].map((icon) => (
          <IconButton key={icon} name={icon} />
        ))}
      </div>
    </RibbonGroup>
    <RibbonGroup title="制图工具 - GC工具箱" className="w-[317px]">
      <div className="ml-[3px] flex flex-col gap-1.5">
        {gcRows.map((row, i) => (
          <div key={i} className="flex h-4">
            {row.map((icon, j) =>
              icon === "|" ? (
                <Divider key={j} className="mr-[3px] ml-0.5 h-[18px]" />
              ) : (
                <button type="button" key={j} aria-label={icon} className="flex w-[23px] justify-center">
                  <Glyph name={icon} />
                </button>
              )
            )}
          </div>
        ))}
      </div>
    </RibbonGroup>
    <RibbonGroup className="w-[97px]">
      <button type="button" className="mx-auto flex flex-col items-center self-start whitespace-nowrap">
        <Glyph name="quickFormat" set="big" className="size-8" />
        <span className="mt-[5px] leading-4">尺寸快速格式化</span>
        <span className="flex items-center leading-4">
          工具 - GC工具箱
          <Caret />
        </span>
      </button>
    </RibbonGroup>
    <div className="flex flex-1 items-end justify-end pr-1.5 pb-1.5">
      <Caret />
    </div>
  </div>
);

const Combo = ({ label, value, className }: { label: string; value: string; className: string }) => (
  <div className={clsx("relative h-[22px] shrink-0", className)}>
    <select aria-label={label} className="size-full appearance-none border border-[#999] bg-white pl-px">
      <option>{value}</option>
    </select>
    <svg viewBox="0 0 8 5" className="pointer-events-none absolute top-2.5 right-1 h-[5px] w-2" aria-hidden="true">
      <path d="M0 0h8L4 4.500z" fill="#111" />
    </svg>
  </div>
);

const Tool = ({ name, on }: { name: string; on?: boolean }) => (
  <button
    type="button"
    aria-label={name}
    aria-pressed={on}
    className={clsx("flex h-[22px] w-[23px] shrink-0 items-center justify-center", on && "border border-[#a9c4e8] bg-[#dde3ee]")}
  >
    <Glyph name={name} />
  </button>
);

const SelectionBar = () => (
  <div className="flex h-7 shrink-0 items-center gap-0.5 border-b border-[#7f8c8c] text-[11px]">
    <button type="button" className="ml-3 flex items-center gap-1.5 whitespace-nowrap">
      <svg viewBox="0 0 12 10" className="h-2.5 w-3" aria-hidden="true">
        <path d="M1 .5h10M1 4.500h10M1 8.500h10" stroke="#333" />
      </svg>
      <span>
        菜单(<u>M</u>)
      </span>
      <Caret />
    </button>
    <Divider className="mr-[11px] ml-[5px] h-5" />
    <Combo label="类型过滤器" value="无选择过滤器" className="mr-[7px] w-[133px]" />
    <Combo label="选择范围" value="整个装配" className="mr-[3px] w-[140px]" />
    <Tool name="selCube" on />
    <Tool name="filterUndo" />
    <Tool name="filterList" />
    <Caret className="mr-1" />
    <Tool name="snapUndo" />
    <Tool name="selChain" />
    <Tool name="selSolid" />
    <Tool name="selRect" />
    <Caret className="mr-[7px]" />
    <Tool name="snapTarget" on />
    <Tool name="snapEnd" on />
    <Tool name="snapMid" on />
    <Tool name="snapArc" />
    <Tool name="snapZig" on />
    <Tool name="snapPoly" on />
    <Tool name="snapCross" />
    <Tool name="snapCenter" on />
    <Tool name="snapQuad" />
    <Tool name="snapPoint" on />
    <Tool name="snapTangent" on />
    <Tool name="snapFace" />
    <Divider className="mr-[7px] ml-1 h-5" />
    <Tool name="winZoom" />
    <Tool name="winPan" />
    <Tool name="winFit" />
    <Caret className="mr-1" />
    <Tool name="eyeList" />
    <Caret className="mr-2 ml-1" />
    <Divider className="h-5" />
    <Caret className="mt-1 mr-1.5 ml-auto" />
  </div>
);

const railItems = [
  { icon: "assembly", label: "装配导航器", className: "mt-[15px]" },
  { icon: "bracket", label: "部件导航器", className: "" },
  { icon: "books", label: "重用库", className: "" },
  { icon: "eye", label: "视图管理器", className: "" },
  { icon: "machine", label: "加工向导", className: "" },
  { icon: "info", label: "消息", className: "mt-3" },
  { icon: "web", label: "浏览器", className: "mt-3" },
  { icon: "clock", label: "历史记录", className: "mt-3" },
  { icon: "tools", label: "工具", className: "" },
];

const Rail = () => (
  <aside className="flex w-8 shrink-0 flex-col items-center border-r border-[#a0a0a0] bg-[#dcdcdc]">
    <button type="button" aria-label="资源条选项" className="flex h-[26px] items-center pr-1">
      <svg viewBox="0 0 16 16" className="size-4">
        <circle cx="8" cy="8" r="4.500" fill="none" stroke="#222" strokeWidth="1.500" />
        <path d="M8 1v2M8 13v2M1 8h2M13 8h2M3 3l1.500 1.500M11.500 11.500 13 13M3 13l1.500-1.500M11.500 4.500 13 3" stroke="#222" strokeWidth="1.500" />
      </svg>
    </button>
    {railItems.map((item) => (
      <button type="button" key={item.icon} aria-label={item.label} className={clsx("flex h-[42px] shrink-0 items-center pl-1", item.className)}>
        <Glyph name={item.icon} set="side" className="size-6" />
      </button>
    ))}
    <button type="button" aria-label="向导树" className="mt-3 -mr-px ml-0.5 flex h-[45px] shrink-0 items-center self-stretch border border-r-0 border-[#a0a0a0] bg-white pl-1">
      <Glyph name="wizard" set="side" className="size-6" />
    </button>
  </aside>
);

const treeRows = [
  { label: "更改项目名", icon: "rename" },
  { label: "注塑模向导", icon: "arrow", branch: true, selected: true },
  { label: "模架管理", icon: "frame" },
  { label: "模架识别", icon: "frameFind" },
  { label: "标准件管理", icon: "standard" },
  { label: "滑块和浮升销", icon: "slider" },
  { label: "创建用户定义特征", icon: "feature" },
  { label: "创建流道通道", icon: "runner" },
  { label: "冷却水路设计", icon: "cooling" },
  { label: "智能设计", icon: "smart", branch: true },
  { label: "变换", icon: "arrow", branch: true },
  { label: "腔设计", icon: "cavity" },
  { label: "对象显示", icon: "arrow", branch: true },
  { label: "实体导出装配", icon: "export" },
  { label: "视图管理器", icon: "eye" },
  { label: "模具图纸", icon: "mold", branch: true },
  { label: "表格数据", icon: "arrow", branch: true },
  { label: "文件", icon: "arrow", branch: true },
  { label: "打印", icon: "print" },
  { label: "设置首选项", icon: "prefs" },
  { label: "用户默认设置", icon: "user" },
];

const WizardTree = () => (
  <aside className="relative flex w-[265px] shrink-0 flex-col border-r border-[#7f8c8c] bg-white text-[12px]">
    <div className="flex h-7 shrink-0 items-center justify-between pr-4 pl-2.5">
      <h2>向导树</h2>
      <button type="button" aria-label="最大化面板" className="h-[11px] w-3 border border-t-2 border-black" />
    </div>
    <div className="mr-[17px] mb-1.5 ml-1.5 flex min-h-0 flex-1 flex-col gap-[7px] overflow-hidden border-t border-r-2 border-l-2 border-t-[#e0e0e0] border-r-[#777] border-l-[#f4f4f4] bg-[#ececec] pt-3 pr-2.5 pl-2">
      <div className="shrink-0 border-t-2 border-r border-b border-l-2 border-t-[#777] border-r-white border-b-white border-l-[#777] bg-white">
        <table className="w-full table-fixed border-collapse">
          <thead>
            <tr className="h-[21px] border-b-2 border-[#777] bg-[#ececec] text-left">
              <th scope="col" className="border-r-2 border-[#777] pl-1.5 font-normal">部件</th>
              <th scope="col" aria-label="状态" className="w-4" />
            </tr>
          </thead>
          <tbody>
            {[0, 1, 2, 3, 4].map((row) => (
              <tr key={row} className="h-[21px] border-b border-[#eaeaea] odd:bg-white even:bg-[#f2f0f8]">
                <td className="border-r border-[#e4e4e4]" />
                <td />
              </tr>
            ))}
          </tbody>
        </table>
      </div>
      <div className="flex min-h-0 flex-1 overflow-hidden border border-b-0 border-[#5a82b8] bg-white">
        <div className="min-w-0 flex-1 pl-px">
          <h3 className="h-[23px] pl-0.5 leading-6">应用模块</h3>
          <ul>
            {treeRows.map((row) => (
              <li
                key={row.label}
                className={clsx(
                  "relative flex h-[21px] items-center border-b pl-1",
                  row.selected ? "border-[#0563cc] bg-[#0563cc]" : "border-[#ebebeb] odd:bg-[#f2f0f8]"
                )}
              >
                <span className="absolute top-0 left-2 h-full border-l border-dotted border-[#909090]" />
                <span className="absolute top-2.5 left-2 w-3 border-t border-dotted border-[#909090]" />
                {row.branch ? (
                  <button type="button" aria-label={`展开${row.label}`} className="relative flex size-[9px] items-center justify-center border border-[#909090] bg-white">
                    <svg viewBox="0 0 5 5" className="size-[5px]">
                      <path d="M0 2.500h5M2.500 0v5" stroke="#24458a" />
                    </svg>
                  </button>
                ) : (
                  <span className="w-[9px]" />
                )}
                <label className="relative flex items-center whitespace-nowrap">
                  <input type="checkbox" className="mr-1 ml-[9px] size-2.5 appearance-none border border-black bg-white outline outline-black/20" />
                  <Glyph name={row.icon} set="tree" />
                  <span className={clsx("ml-0.5 leading-[17px]", row.selected && "outline-1 outline-[#7fb0ea] outline-dotted")}>{row.label}</span>
                </label>
              </li>
            ))}
          </ul>
        </div>
        <div className="flex w-4 shrink-0 flex-col bg-[#f0f0f0]">
          <button type="button" aria-label="向上滚动" className="flex h-5 shrink-0 items-center justify-center bg-[#f8f8f8]">
            <svg viewBox="0 0 8 6" className="h-1.5 w-2">
              <path d="M.5 5 4 1.500 7.500 5" fill="none" stroke="#444" strokeWidth="1.500" />
            </svg>
          </button>
          <div className="mt-[18px] flex-1 bg-[#c9c9c9]" />
        </div>
        <div className="w-px bg-white" />
      </div>
    </div>
    <svg viewBox="0 0 12 20" className="pointer-events-none absolute top-[299px] left-[173px] h-5 w-3" aria-hidden="true">
      <path d="M.8.8v15.500l3.700-3.300 2.500 6 2.500-1-2.500-5.800h4.500z" fill="#fff" stroke="#111" />
    </svg>
  </aside>
);

const stripIcons = ["boxX", "bigX", "wrenchPlan", "open", "gridRed", "saveBig", "quickDim", "editText", "quickDimOff", "colorTable"];

const CommandStrip = () => (
  <div className="flex w-[35px] shrink-0 flex-col bg-white pt-[13px] pr-px pb-1.5">
    <div className="mx-1 flex flex-col items-center gap-2 border-b border-[#d4d4d4] pb-2">
      {stripIcons.map((icon) => (
        <button type="button" key={icon} aria-label={icon}>
          <Glyph name={icon} set="side" className="block size-6" />
        </button>
      ))}
    </div>
    <button type="button" aria-label="收起" className="mt-auto ml-2 w-1">
      <svg viewBox="0 0 4 6" className="h-1.5 w-1">
        <path d="M4 0v6L0 3z" fill="#111" />
      </svg>
    </button>
  </div>
);

const Sheet = () => (
  <div className="flex min-h-0 flex-1 border border-[#666] bg-[#d3d3d3] px-[9px] py-[15px]">
    <svg className="min-h-0 w-full overflow-visible" role="img" aria-label="A3 图纸">
      <g stroke="#5f6262" strokeDasharray="8 8">
        <line x1="5" y1=".5" x2="100%" y2=".5" />
        <line x1="0" y1="100%" x2="100%" y2="100%" />
      </g>
      <g stroke="#5f8f92" strokeDasharray="8 8">
        <line x1=".5" y1="3" x2=".5" y2="100%" />
        <line x1="100%" y1="3" x2="100%" y2="100%" />
      </g>
      <g fill="none" stroke="#33689b" strokeWidth="1.800" strokeLinejoin="round">
        <path d="M135.500 140.500H437.500V215.500H135.500zM427.500 140.500V215.500" />
        <path d="M570.500 161.500H620.500V140.500H699.500V215.500H570.500z" />
        <path d="M226.500 370.500V335.500M350.500 370.500H371.500V335.500M247.500 370.500H226.500M135.500 385H437.500" />
        <path d="M135.500 335.500H247.500V370.500H350.500V335.500H437.500V453L427 463.500H135.500z" />
      </g>
      <text x="0" y="100%" dy="11" fontSize="13" fill="#ffb85c">"A3_1"</text>
    </svg>
  </div>
);

const Workspace = () => (
  <main className="flex min-w-0 flex-1 flex-col pb-0.5">
    <div className="flex h-[21px] shrink-0 items-center pl-1.5 text-[12px]">
      <button type="button" className="flex w-[90px] items-center gap-1">
        <Glyph name="home" />
        欢迎页面
      </button>
      <div className="flex h-full items-center gap-1 bg-[#58b3dc] pr-1.5 pl-1.5 text-[#eef7fb]">
        <Glyph name="part" />
        <span>default.prt</span>
        <button type="button" aria-label="关闭 default.prt" className="pl-0.5">
          <svg viewBox="0 0 10 10" className="size-2.5">
            <path d="M1.500 1.500l7 7M8.500 1.500l-7 7" stroke="#fff" strokeWidth="2" />
          </svg>
        </button>
      </div>
    </div>
    <div className="h-0.5 shrink-0 bg-[#58b3dc]" />
    <div className="flex min-h-0 flex-1 pr-px pl-px">
      <Sheet />
    </div>
  </main>
);

const App = () => {
  return (
    <div className="flex h-screen flex-col overflow-hidden border border-[#a0a0a0] bg-white font-['Noto_Sans','Noto_Sans_CJK_SC',sans-serif] text-[#111]">
      <div className="flex min-h-0 flex-1 flex-col px-[3px]">
        <TitleBar />
        <TabBar />
        <Ribbon />
        <SelectionBar />
        <div className="flex min-h-0 flex-1 border-b border-[#a0a0a0]">
          <Rail />
          <WizardTree />
          <CommandStrip />
          <Workspace />
        </div>
        <footer className="flex h-[21px] shrink-0 items-center justify-end gap-1 pr-[53px]">
          <Glyph name="flagCheck" />
          <Glyph name="corners" />
        </footer>
      </div>
      <div className="h-[7px] shrink-0 bg-[#58b3dc]" />
    </div>
  );
};

export default App;
